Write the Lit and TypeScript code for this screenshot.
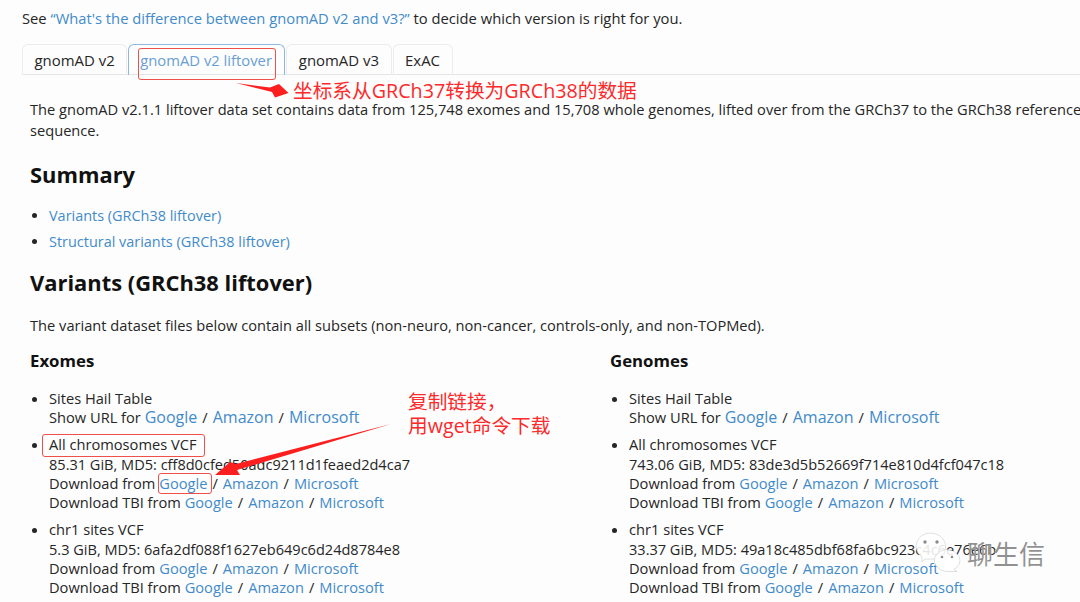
import { LitElement, html, css } from "lit";
import { customElement } from "lit/decorators.js";

const provs = () => html`<a>Google</a><span class="sep"> / </span><a>Amazon</a><span class="sep"> / </span><a>Microsoft</a>`;

const block = (size: string, md5: string) => html`
  <div class="meta">${size}, MD5: ${md5}</div>
  <div>Download from ${provs()}</div>
  <div>Download TBI from ${provs()}</div>`;

const column = (title: string, all: [string, string], chr1: [string, string]) => html`
  <section>
    <h3>${title}</h3>
    <ul class="files">
      <li><div>Sites Hail Table</div><div class="url">Show URL for ${provs()}</div></li>
      <li><div>All chromosomes VCF</div>${block(all[0], all[1])}</li>
      <li><div>chr1 sites VCF</div>${block(chr1[0], chr1[1])}</li>
    </ul>
  </section>`;

@customElement("app-root")
export class AppRoot extends LitElement {
  static styles = css`
    :host { display: block; width: 1080px; height: 602px; overflow: hidden; position: relative; background: #fdfdfd; color: #262626; font-family: "Open Sans", "Noto Sans CJK SC", sans-serif; font-size: 14.65px; }
    a { color: #428bca; }
    .sep { margin: 0 1.25px; }
    .page { padding: 8px 0 0 22px; width: 1200px; }
    .intro { margin: 0; line-height: 21px; font-size: 14.75px; }
    .tabs { display: flex; gap: 1px; margin-top: 15px; height: 31px; border-bottom: 1px solid #e6e6e6; box-sizing: border-box; font-size: 14.95px; }
    .tab { box-sizing: border-box; height: 31px; padding: 0 11.5px; line-height: 31px; border: 1px solid #ececec; border-bottom: none; border-radius: 6px 6px 0 0; white-space: nowrap; }
    .tab.active { color: #6a9fd3; border-color: #8db8e0; font-size: 14.8px; padding: 0 11px; width: 157px; }
    .body { padding: 24px 0 0 8px; }
    .body p { margin: 0; line-height: 21px; }
    h2 { font-size: 21.9px; font-weight: 700; margin: 0; line-height: 30px; color: #111; }
    .sum-h { margin-top: 19px; }
    .summary { margin: 16px 0 0; padding: 0 0 0 19px; list-style: disc; font-size: 14.45px; }
    .summary li { line-height: 20px; margin-bottom: 5.5px; }
    .var-h { margin-top: 16.5px; }
    .body .desc { margin-top: 17px; }
    .cols { display: grid; grid-template-columns: 580px 580px; margin-top: 14px; }
    h3 { font-size: 16.8px; font-weight: 700; margin: 0; line-height: 22px; color: #111; }
    .files { margin: 17px 0 0; padding: 0 0 0 19px; list-style: disc; }
    .files li { line-height: 19.3px; margin-bottom: 7.8px; }
    .files .url, .files li > div { width: fit-content; }
    .meta { font-size: 14.56px; }
    .url a { font-size: 16px; }
    .note { position: absolute; color: #fc2a2a; font-size: 19.7px; line-height: 20px; white-space: nowrap; }
    .box { position: absolute; border: 1px solid #f0504a; border-radius: 3px; box-sizing: border-box; }
    .b1 { left: 138px; top: 48px; width: 138px; height: 32px; }
    .b2 { left: 42px; top: 434px; width: 163px; height: 23px; }
    .b3 { left: 158px; top: 473px; width: 54px; height: 21px; }
    .n1 { left: 293px; top: 81px; }
    .n2 { left: 408px; top: 392px; }
    .n3 { left: 408px; top: 416px; }
    .overlay { position: absolute; left: 0; top: 0; }
    .wm { position: absolute; left: 967px; top: 538px; font-size: 26px; line-height: 32px; color: rgba(115,115,115,.78); text-shadow: 0 0 1px #fff; white-space: nowrap; }
  `;

  render() {
    return html`
      <div class="page">
        <p class="intro">See <a>“What's the difference between gnomAD v2 and v3?”</a> to decide which version is right for you.</p>
        <div class="tabs">
          <div class="tab">gnomAD v2</div>
          <div class="tab active">gnomAD v2 liftover</div>
          <div class="tab">gnomAD v3</div>
          <div class="tab">ExAC</div>
        </div>
        <div class="body">
          <p>The gnomAD v2.1.1 liftover data set contains data from 125,748 exomes and 15,708 whole genomes, lifted over from the GRCh37 to the GRCh38 reference<br />sequence.</p>
          <h2 class="sum-h">Summary</h2>
          <ul class="summary">
            <li><a>Variants (GRCh38 liftover)</a></li>
            <li><a>Structural variants (GRCh38 liftover)</a></li>
          </ul>
          <h2 class="var-h">Variants (GRCh38 liftover)</h2>
          <p class="desc">The variant dataset files below contain all subsets (non-neuro, non-cancer, controls-only, and non-TOPMed).</p>
          <div class="cols">
            ${column("Exomes", ["85.31 GiB", "cff8d0cfed50adc9211d1feaed2d4ca7"], ["5.3 GiB", "6afa2df088f1627eb649c6d24d8784e8"])}
            ${column("Genomes", ["743.06 GiB", "83de3d5b52669f714e810d4fcf047c18"], ["33.37 GiB", "49a18c485dbf68fa6bc923c4c6e76e6b"])}
          </div>
        </div>
      </div>

      <div class="box b1"></div>
      <div class="box b2"></div>
      <div class="box b3"></div>
      <div class="note n1">坐标系从GRCh37转换为GRCh38的数据</div>
      <div class="note n2">复制链接，</div>
      <div class="note n3">用wget命令下载</div>
      <svg class="overlay" width="1080" height="602" viewBox="0 0 1080 602">
        <path d="M236 83 L270 87.5 L279 84 L288.5 93 L275 97.5 L272 92 Z" fill="#fb1f1f" />
        <path d="M391 424 L236 464 L230 462 L215 475 L240 475 L237 470 Z" fill="#fb1f1f" />
        <g fill="#fff" fill-opacity=".88" stroke="#bdbdbd" stroke-opacity=".45" stroke-width="1">
          <path d="M930 533 a15.5 13.5 0 0 1 6 26 l-11 0 l-3 3 l0 -5 a15.5 13.5 0 0 1 8 -24 Z" />
          <path d="M946 549.5 a14 11 0 0 1 8 20 l3 2 l-6 0 a14 11 0 1 1 -5 -22 Z" />
        </g>
        <circle cx="925" cy="542" r="1.7" fill="#8a8a8a" /><circle cx="937" cy="542" r="1.7" fill="#8a8a8a" />
        <circle cx="942" cy="557" r="1.3" fill="#8a8a8a" /><circle cx="952" cy="557" r="1.3" fill="#8a8a8a" />
      </svg>
      <div class="wm">聊生信</div>
    `;
  }
}
